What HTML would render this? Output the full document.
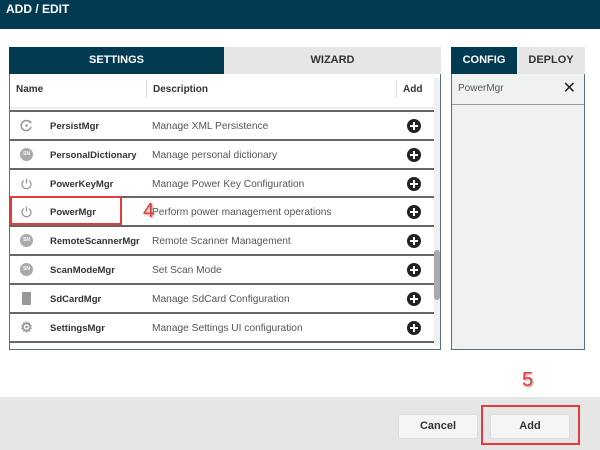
<!DOCTYPE html>
<html><head><style>
body{margin:0;width:600px;height:450px;overflow:hidden;background:#fff;font-family:"Liberation Sans",sans-serif;position:relative}
.abs{position:absolute}
.hdr{left:0;top:0;width:600px;height:29px;background:#023a52;color:#fff;font-weight:bold;font-size:12px}
.tab{top:47px;height:27px;line-height:27px;text-align:center;font-weight:bold;font-size:11px}
.dark{background:#023a52;color:#fff}.light{background:#e6e6e6;color:#333}
.panel{left:9px;top:74px;width:430px;height:275px;border:1px solid #57707e;border-top:none;overflow:hidden;background:#fff}
.row{position:absolute;left:0;width:424px;height:28px;border-top:2px solid #666;font-size:10px}
.nm{position:absolute;left:40px;top:9px;font-weight:bold;color:#333;font-size:9.5px}
.ds{position:absolute;left:142px;top:9px;color:#555;font-size:10.2px}
.plus{position:absolute;left:397px;top:7px;width:14px;height:14px;border-radius:50%;background:#222}
.plus:before{content:"";position:absolute;left:3px;top:6px;width:8px;height:2.4px;background:#fff}
.plus:after{content:"";position:absolute;left:5.8px;top:3px;width:2.4px;height:8px;background:#fff}
.ic{position:absolute;left:10px;top:7px;width:13px;height:13px;border-radius:50%;background:#aaa;color:#fff;font-size:5px;text-align:center;line-height:13px;font-weight:bold}
.btn{top:414px;height:23px;width:78px;background:#f5f5f5;border:1px solid #ddd;border-radius:2px;text-align:center;line-height:23px;font-size:11px;font-weight:bold;color:#333}
</style></head><body>
<div class="abs hdr"><span style="position:absolute;left:6px;top:2px">ADD / EDIT</span></div>
<div class="abs tab dark" style="left:9px;width:215px">SETTINGS</div>
<div class="abs tab light" style="left:224px;width:217px">WIZARD</div>
<div class="abs panel">
 <div style="position:absolute;left:6px;top:10px;font-size:10px;font-weight:bold;color:#333">Name</div>
 <div style="position:absolute;left:136px;top:6px;width:1px;height:18px;background:#ddd"></div>
 <div style="position:absolute;left:143px;top:10px;font-size:10px;font-weight:bold;color:#333">Description</div>
 <div style="position:absolute;left:386px;top:6px;width:1px;height:18px;background:#ddd"></div>
 <div style="position:absolute;left:393px;top:10px;font-size:10px;font-weight:bold;color:#333">Add</div>
 <div style="position:absolute;left:0;top:33px;width:424px;height:2px;background:#eee"></div>
 <div class="row" style="top:36px"><svg class="ic" style="background:none" viewBox="0 0 13 13"><path d="M10.5 4A5 5 0 1 0 11 8" fill="none" stroke="#999" stroke-width="1.6"/><path d="M8.5 2.5L11.5 4.5 11 1.5z" fill="#999"/><circle cx="6.5" cy="6.5" r="1.3" fill="#999"/></svg><span class="nm">PersistMgr</span><span class="ds">Manage XML Persistence</span><i class="plus"></i></div>
 <div class="row" style="top:65px"><span class="ic">SN</span><span class="nm">PersonalDictionary</span><span class="ds">Manage personal dictionary</span><i class="plus"></i></div>
 <div class="row" style="top:94px"><svg class="ic" style="background:none" viewBox="0 0 13 13"><path d="M4 3.5A4.5 4.5 0 1 0 9 3.5" fill="none" stroke="#999" stroke-width="1.3"/><path d="M6.5 1.5v5" stroke="#999" stroke-width="1.3"/></svg><span class="nm">PowerKeyMgr</span><span class="ds">Manage Power Key Configuration</span><i class="plus"></i></div>
 <div class="row" style="top:122px"><svg class="ic" style="background:none" viewBox="0 0 13 13"><path d="M4 3.5A4.5 4.5 0 1 0 9 3.5" fill="none" stroke="#999" stroke-width="1.3"/><path d="M6.5 1.5v5" stroke="#999" stroke-width="1.3"/></svg><span class="nm">PowerMgr</span><span class="ds">Perform power management operations</span><i class="plus"></i></div>
 <div class="row" style="top:151px"><span class="ic">SN</span><span class="nm">RemoteScannerMgr</span><span class="ds">Remote Scanner Management</span><i class="plus"></i></div>
 <div class="row" style="top:180px"><span class="ic">SN</span><span class="nm">ScanModeMgr</span><span class="ds">Set Scan Mode</span><i class="plus"></i></div>
 <div class="row" style="top:209px"><span class="ic" style="border-radius:1px;width:9px;left:12px;background:#999"></span><span class="nm">SdCardMgr</span><span class="ds">Manage SdCard Configuration</span><i class="plus"></i></div>
 <div class="row" style="top:238px"><span class="ic" style="background:none;color:#999;font-size:14px;line-height:13px">⚙</span><span class="nm">SettingsMgr</span><span class="ds">Manage Settings UI configuration</span><i class="plus"></i></div>
 <div class="row" style="top:267px"></div>
 <div style="position:absolute;left:424px;top:4px;width:6px;height:268px;background:#f0f0f0;border-radius:3px"></div>
 <div style="position:absolute;left:424px;top:176px;width:6px;height:50px;background:#aaa;border-radius:3px"></div>
</div>
<div class="abs tab dark" style="left:451px;width:66px">CONFIG</div>
<div class="abs tab light" style="left:517px;width:68px">DEPLOY</div>
<div class="abs" style="left:451px;top:74px;width:132px;height:275px;border:1px solid #57707e;border-top:none;background:#f0f1f1">
 <div style="height:30px;border-bottom:1px solid #999;font-size:10px;color:#555;line-height:30px;padding-left:6px;position:relative">PowerMgr<span style="position:absolute;right:8px;top:0;font-size:16px;color:#222">✕</span></div>
</div>
<div class="abs" style="left:0;top:397px;width:600px;height:53px;background:#e6e6e6"></div>
<div class="abs btn" style="left:398px">Cancel</div>
<div class="abs btn" style="left:490px">Add</div>
<div class="abs" style="left:481px;top:405px;width:95px;height:36px;border:2px solid #e53b3b"></div>
<div class="abs" style="left:10px;top:196px;width:108px;height:25px;border:2px solid #e53b3b"></div>
<div class="abs" style="left:143px;top:200px;font-size:20px;color:#e53b3b;text-shadow:1px 1px 2px #888">4</div>
<div class="abs" style="left:522px;top:369px;font-size:20px;color:#e53b3b;text-shadow:1px 1px 2px #888">5</div>
</body></html>
